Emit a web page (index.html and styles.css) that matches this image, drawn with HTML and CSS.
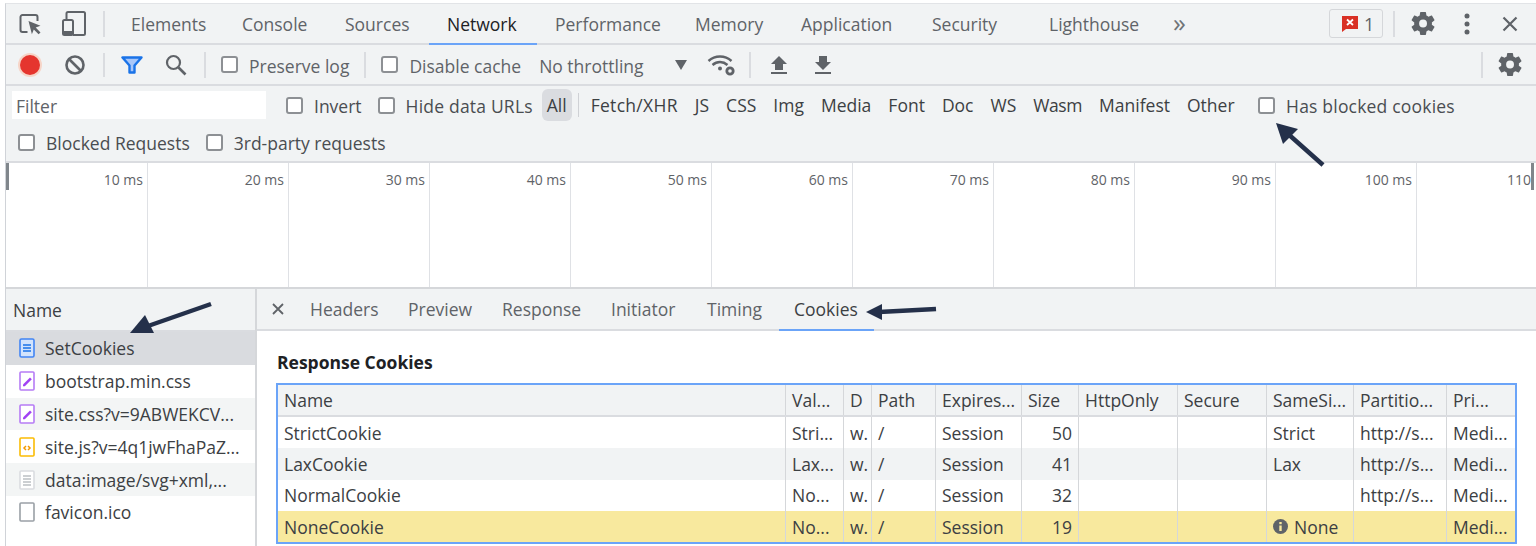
FILE: index.html
```html
<!DOCTYPE html>
<html lang="en">
<head>
<meta charset="utf-8">
<title>DevTools Network</title>
<link rel="stylesheet" href="styles.css">
</head>
<body>
<div class="devtools">
  <div class="bar tabs-bar">
    <div class="icon-group">
      <svg class="ico" width="26" height="26" viewBox="0 0 26 26"><path d="M9.500 21H4.500a2 2 0 0 1-2-2V6a2 2 0 0 1 2-2h13a2 2 0 0 1 2 2v4" fill="none" stroke="#5f6368" stroke-width="2"/><path d="M10.500 10l12 4.800-4.800 1.800 4.800 4.800-1.900 1.900-4.800-4.800-1.900 4.800z" fill="#5f6368"/></svg>
      <svg class="ico" width="24" height="25" viewBox="0 0 24 25"><path d="M4.500 8V2.500A1.500 1.500 0 0 1 6 1h15.500A1.500 1.500 0 0 1 23 2.500v20a1.500 1.500 0 0 1-1.500 1.500H11" fill="none" stroke="#5f6368" stroke-width="2"/><rect x="1" y="9" width="10" height="15" rx="1.500" fill="none" stroke="#5f6368" stroke-width="2"/><rect x="2" y="20" width="8" height="4" fill="#5f6368"/></svg>
    </div>
    <span class="sep sep-tabs"></span>
    <nav class="tabs">
      <span class="tab">Elements</span>
      <span class="tab">Console</span>
      <span class="tab">Sources</span>
      <span class="tab active">Network</span>
      <span class="tab">Performance</span>
      <span class="tab">Memory</span>
      <span class="tab">Application</span>
      <span class="tab">Security</span>
      <span class="tab">Lighthouse</span>
    </nav>
    <span class="more">»</span>
    <div class="right-tools">
      <span class="badge">
        <svg width="18" height="18" viewBox="0 0 18 18"><path d="M1 1h16v13H5l-4 3z" fill="#d93025"/><path d="M6 4.500l6 5.500M12 4.500l-6 5.500" stroke="#fff" stroke-width="1.800"/></svg>
        <span>1</span>
      </span>
      <span class="sep sep-badge"></span>
      <svg class="gear" width="27" height="27" viewBox="0 0 24 24"><path d="M19.400 13c.1-.3.100-.7.100-1s0-.7-.1-1l2.200-1.700c.2-.2.200-.4.100-.6l-2.100-3.600c-.1-.2-.4-.3-.6-.2l-2.600 1c-.5-.4-1.100-.8-1.800-1L14.200 2.200c0-.2-.2-.4-.5-.4h-4.200c-.3 0-.5.200-.5.400l-.4 2.700c-.6.300-1.200.6-1.800 1l-2.600-1c-.2-.1-.5 0-.6.200L1.500 8.700c-.1.200-.1.500.100.600L3.800 11c0 .3-.1.700-.1 1s0 .7.100 1l-2.200 1.700c-.2.200-.2.400-.1.600l2.100 3.600c.1.200.4.300.6.200l2.600-1c.5.400 1.100.8 1.800 1l.4 2.700c0 .2.200.4.500.4h4.200c.3 0 .5-.2.500-.4l.4-2.700c.6-.3 1.200-.6 1.800-1l2.600 1c.2.100.5 0 .6-.2l2.100-3.600c.1-.2.100-.5-.1-.6zM11.600 15.500a3.500 3.500 0 1 1 0-7 3.500 3.500 0 0 1 0 7z" fill="#5f6368"/></svg>
      <svg class="dots" width="6" height="22" viewBox="0 0 6 22"><circle cx="3" cy="3" r="2.500" fill="#5f6368"/><circle cx="3" cy="11" r="2.500" fill="#5f6368"/><circle cx="3" cy="19" r="2.500" fill="#5f6368"/></svg>
      <svg class="close" width="16" height="16" viewBox="0 0 16 16"><path d="M1.500 1.500l13 13M14.500 1.500l-13 13" stroke="#5f6368" stroke-width="2.200"/></svg>
    </div>
  </div>

  <div class="bar tool-bar">
    <span class="record"></span>
    <svg class="clear" width="20" height="20" viewBox="0 0 20 20"><circle cx="10" cy="10" r="8.500" fill="none" stroke="#5f6368" stroke-width="2.600"/><path d="M4 4l12 12" stroke="#5f6368" stroke-width="2.600"/></svg>
    <span class="sep sep-a"></span>
    <svg class="funnel" width="22" height="18" viewBox="0 0 22 18"><path d="M1.500 1.500h19l-7 8v7h-5v-7z" fill="#a8c7fa" stroke="#1a73e8" stroke-width="2.400" stroke-linejoin="round"/></svg>
    <svg class="search" width="22" height="22" viewBox="0 0 22 22"><circle cx="8.500" cy="8.500" r="6.500" fill="none" stroke="#5f6368" stroke-width="2.200"/><path d="M13.500 13.500l7 7" stroke="#5f6368" stroke-width="2.600"/></svg>
    <span class="sep sep-b"></span>
    <label class="check muted check-preserve"><span class="box"></span>Preserve log</label>
    <span class="sep sep-c"></span>
    <label class="check muted check-cache"><span class="box"></span>Disable cache</label>
    <span class="throttle">No throttling</span>
    <span class="caret"></span>
    <svg class="wifi" width="28" height="22" viewBox="0 0 28 22"><path d="M1.500 7C8 1 18 1 24.500 7M5.500 11c4.500-4 10.500-4 15 0" fill="none" stroke="#5f6368" stroke-width="2.400"/><circle cx="13" cy="14.500" r="2" fill="#5f6368"/><circle cx="23" cy="17" r="3.200" fill="none" stroke="#5f6368" stroke-width="2.800"/></svg>
    <span class="sep sep-d"></span>
    <svg class="updown" width="18" height="20" viewBox="0 0 18 20"><path d="M9 1l8 8h-4v6H5V9H1z" fill="#5f6368"/><rect x="1" y="17" width="16" height="2" fill="#5f6368"/></svg>
    <svg class="updown down" width="18" height="20" viewBox="0 0 18 20"><path d="M9 15l8-8h-4V1H5v6H1z" fill="#5f6368"/><rect x="1" y="17" width="16" height="2" fill="#5f6368"/></svg>
    <span class="spring"></span>
    <span class="sep sep-e"></span>
    <svg class="gear gear-tool" width="27" height="27" viewBox="0 0 24 24"><path d="M19.400 13c.1-.3.100-.7.100-1s0-.7-.1-1l2.200-1.700c.2-.2.200-.4.100-.6l-2.100-3.600c-.1-.2-.4-.3-.6-.2l-2.600 1c-.5-.4-1.100-.8-1.800-1L14.200 2.200c0-.2-.2-.4-.5-.4h-4.200c-.3 0-.5.200-.5.400l-.4 2.700c-.6.300-1.200.6-1.800 1l-2.600-1c-.2-.1-.5 0-.6.200L1.500 8.700c-.1.200-.1.500.100.600L3.800 11c0 .3-.1.700-.1 1s0 .7.100 1l-2.200 1.700c-.2.200-.2.400-.1.600l2.100 3.600c.1.200.4.300.6.200l2.600-1c.5.400 1.100.8 1.800 1l.4 2.700c0 .2.200.4.500.4h4.200c.3 0 .5-.2.500-.4l.4-2.700c.6-.3 1.200-.6 1.800-1l2.600 1c.2.100.5 0 .6-.2l2.100-3.600c.1-.2.100-.5-.1-.6zM11.600 15.500a3.500 3.500 0 1 1 0-7 3.500 3.500 0 0 1 0 7z" fill="#5f6368"/></svg>
  </div>

  <div class="filters">
    <div class="filter-row">
      <span class="filter-input">Filter</span>
      <label class="check check-invert"><span class="box"></span>Invert</label>
      <label class="check check-hide"><span class="box"></span>Hide data URLs</label>
      <span class="type-all">All</span>
      <span class="sep sep-type"></span>
      <span class="type type-fetch">Fetch/XHR</span>
      <span class="type">JS</span>
      <span class="type">CSS</span>
      <span class="type">Img</span>
      <span class="type">Media</span>
      <span class="type">Font</span>
      <span class="type">Doc</span>
      <span class="type">WS</span>
      <span class="type type-wasm">Wasm</span>
      <span class="type">Manifest</span>
      <span class="type">Other</span>
      <label class="check check-blocked"><span class="box"></span>Has blocked cookies</label>
    </div>
    <div class="filter-row second">
      <label class="check check-req"><span class="box"></span>Blocked Requests</label>
      <label class="check"><span class="box"></span>3rd-party requests</label>
    </div>
  </div>

  <div class="timeline">
    <span class="tick">10 ms</span><span class="tick">20 ms</span><span class="tick">30 ms</span><span class="tick">40 ms</span><span class="tick">50 ms</span><span class="tick">60 ms</span><span class="tick">70 ms</span><span class="tick">80 ms</span><span class="tick">90 ms</span><span class="tick">100 ms</span><span class="tick tick-last">110</span>
    <span class="handle handle-l"></span><span class="handle handle-r"></span>
  </div>

  <div class="lower">
    <aside class="side">
      <div class="side-head">Name</div>
      <div class="req selected">
        <svg class="file" width="16" height="20" viewBox="0 0 16 20"><rect x="1" y="1" width="14" height="18" rx="1.500" fill="#d2e3fc" stroke="#4285f4" stroke-width="1.600"/><path d="M4 7h8M4 10h8M4 13h8" stroke="#1a73e8" stroke-width="1.500"/></svg>
        <span>SetCookies</span>
      </div>
      <div class="req">
        <svg class="file" width="16" height="20" viewBox="0 0 16 20"><rect x="1" y="1" width="14" height="18" rx="1" fill="#fff" stroke="#b67cf5" stroke-width="1.600"/><path d="M4 13.500l7-7 1.800 1.800-7 7H4z" fill="#a142f4"/></svg>
        <span>bootstrap.min.css</span>
      </div>
      <div class="req alt">
        <svg class="file" width="16" height="20" viewBox="0 0 16 20"><rect x="1" y="1" width="14" height="18" rx="1" fill="#fff" stroke="#b67cf5" stroke-width="1.600"/><path d="M4 13.500l7-7 1.800 1.800-7 7H4z" fill="#a142f4"/></svg>
        <span>site.css?v=9ABWEKCV...</span>
      </div>
      <div class="req">
        <svg class="file" width="16" height="20" viewBox="0 0 16 20"><rect x="1" y="1" width="14" height="18" rx="1" fill="#fff" stroke="#fbbc04" stroke-width="1.600"/><path d="M7 9l-2 2 2 2M9 9l2 2-2 2" fill="none" stroke="#f29900" stroke-width="1.500"/></svg>
        <span>site.js?v=4q1jwFhaPaZ...</span>
      </div>
      <div class="req alt">
        <svg class="file" width="16" height="20" viewBox="0 0 16 20"><rect x="1" y="1" width="14" height="18" rx="1" fill="#fff" stroke="#dadce0" stroke-width="1.600"/><path d="M4 6h8M4 9h8M4 12h8M4 15h8" stroke="#9aa0a6" stroke-width="1.200"/></svg>
        <span>data:image/svg+xml,...</span>
      </div>
      <div class="req">
        <svg class="file" width="16" height="20" viewBox="0 0 16 20"><rect x="1" y="1" width="14" height="18" rx="1" fill="#fff" stroke="#9aa0a6" stroke-width="1.600"/></svg>
        <span>favicon.ico</span>
      </div>
    </aside>

    <section class="detail">
      <div class="detail-tabs">
        <svg class="detail-close" width="12" height="12" viewBox="0 0 12 12"><path d="M1 1l10 10M11 1L1 11" stroke="#5f6368" stroke-width="1.800"/></svg>
        <div class="dtabs">
          <span class="dtab">Headers</span>
          <span class="dtab">Preview</span>
          <span class="dtab">Response</span>
          <span class="dtab">Initiator</span>
          <span class="dtab">Timing</span>
          <span class="dtab active">Cookies</span>
        </div>
      </div>
      <div class="detail-body">
        <h2 class="cookies-title">Response Cookies</h2>
        <div class="cookie-table">
          <div class="row head">
            <span class="cell">Name</span><span class="cell">Val...</span><span class="cell">D</span><span class="cell">Path</span><span class="cell">Expires...</span><span class="cell">Size</span><span class="cell">HttpOnly</span><span class="cell">Secure</span><span class="cell">SameSi...</span><span class="cell">Partitio...</span><span class="cell">Pri...</span>
          </div>
          <div class="row">
            <span class="cell">StrictCookie</span><span class="cell">Stri...</span><span class="cell">w.</span><span class="cell">/</span><span class="cell">Session</span><span class="cell num">50</span><span class="cell"></span><span class="cell"></span><span class="cell">Strict</span><span class="cell">http://s...</span><span class="cell">Medi...</span>
          </div>
          <div class="row zebra">
            <span class="cell">LaxCookie</span><span class="cell">Lax...</span><span class="cell">w.</span><span class="cell">/</span><span class="cell">Session</span><span class="cell num">41</span><span class="cell"></span><span class="cell"></span><span class="cell">Lax</span><span class="cell">http://s...</span><span class="cell">Medi...</span>
          </div>
          <div class="row">
            <span class="cell">NormalCookie</span><span class="cell">No...</span><span class="cell">w.</span><span class="cell">/</span><span class="cell">Session</span><span class="cell num">32</span><span class="cell"></span><span class="cell"></span><span class="cell"></span><span class="cell">http://s...</span><span class="cell">Medi...</span>
          </div>
          <div class="row flagged">
            <span class="cell">NoneCookie</span><span class="cell">No...</span><span class="cell">w.</span><span class="cell">/</span><span class="cell">Session</span><span class="cell num">19</span><span class="cell"></span><span class="cell"></span><span class="cell cell-info"><svg width="15" height="15" viewBox="0 0 15 15"><circle cx="7.500" cy="7.500" r="7.500" fill="#5f6368"/><rect x="6.300" y="6.500" width="2.400" height="5.500" fill="#f8e99e"/><rect x="6.300" y="3" width="2.400" height="2.200" fill="#f8e99e"/></svg>None</span><span class="cell"></span><span class="cell">Medi...</span>
          </div>
        </div>
      </div>
    </section>
  </div>

  <svg class="arrow arrow-blocked" width="54" height="48" viewBox="0 0 54 48"><path d="M50 44L14 12" stroke="#24304a" stroke-width="4.500"/><path d="M3 2l22 6-15 15z" fill="#24304a"/></svg>
  <svg class="arrow arrow-name" width="84" height="38" viewBox="0 0 84 38"><path d="M83 6L20 28" stroke="#24304a" stroke-width="4.500"/><path d="M2 35l15-18 9 18z" fill="#24304a"/></svg>
  <svg class="arrow arrow-cookies" width="72" height="20" viewBox="0 0 72 20"><path d="M71 7L14 10" stroke="#24304a" stroke-width="4.500"/><path d="M1 10l16-8v16z" fill="#24304a"/></svg>
</div>
</body>
</html>
```
FILE: styles.css
```css
* { box-sizing: border-box; }
html, body { margin: 0; padding: 0; background: #fff; }
body { width: 1536px; height: 546px; overflow: hidden; }

.devtools {
  position: relative;
  margin: 3px 0 0 5px;
  height: 543px;
  font-family: "Open Sans", "Noto Sans", sans-serif;
  font-size: 17.5px;
  line-height: 24px;
  color: #3c4043;
  border-left: 1px solid #d0d3d8;
  border-top: 1px solid #e2e4e7;
  overflow: hidden;
}

.bar { display: flex; align-items: center; background: #f1f3f4; border-bottom: 2px solid #dadce0; }
.tabs-bar { height: 41px; }
.tool-bar { height: 41px; }

.icon-group { display: flex; align-items: center; width: 91px; padding-left: 12px; gap: 18px; flex: none; }
.sep { display: block; width: 2px; height: 26px; background: #dadce0; flex: none; }
.sep-tabs { margin-left: 6px; }
.tabs { display: grid; grid-template-columns: 111px 103px 102px 108px 140px 106px 131px 117px 124px; height: 39px; margin-left: 8px; flex: none; }
.tab { display: flex; align-items: center; padding-left: 18px; color: #5f6368; white-space: nowrap; border-bottom: 2px solid transparent; height: 41px; }
.tab.active { color: #202124; border-bottom-color: #6ba4f8; }
.more { font-size: 26px; color: #6f7377; margin-left: 18px; padding-bottom: 4px; flex: none; }
.right-tools { margin-left: auto; display: flex; align-items: center; padding-right: 18px; }
.badge { display: flex; align-items: center; gap: 5px; width: 54px; height: 29px; padding-left: 11px; border: 1px solid #d5d7da; border-radius: 3px; color: #5f6368; font-size: 18px; }
.sep-badge { margin: 0 15px 0 10px; }
.dots { margin: 0 32px 0 27px; }

.record { width: 20px; height: 20px; margin-left: 14px; background: #e5352e; border-radius: 50%; box-shadow: 0 0 0 2px #f6d5c8; flex: none; }
.clear { margin-left: 25px; flex: none; }
.sep-a { margin-left: 18px; height: 24px; }
.funnel { margin-left: 16px; flex: none; }
.search { margin-left: 22px; flex: none; }
.sep-b { margin-left: 17px; }
.check { display: inline-flex; align-items: center; gap: 11px; color: #4a4d51; white-space: nowrap; }
.check.muted { color: #5f6368; padding-top: 2px; }
.check.muted .box { margin-top: -2px; }
.box { display: block; width: 17px; height: 17px; border: 2px solid #8d9094; border-radius: 3px; background: #fff; flex: none; }
.check-preserve { margin-left: 15px; }
.sep-c { margin-left: 15px; }
.check-cache { margin-left: 15px; }
.throttle { margin-left: 18px; padding-top: 2px; color: #5f6368; white-space: nowrap; }
.caret { width: 0; height: 0; margin-left: 31px; border-left: 6px solid transparent; border-right: 6px solid transparent; border-top: 10px solid #5f6368; flex: none; }
.wifi { margin-left: 20px; flex: none; }
.sep-d { margin-left: 14px; }
.updown { margin-left: 19px; flex: none; }
.updown.down { margin-left: 26px; }
.spring { flex: 1; }
.gear-tool { margin: 0 12px 0 14px; flex: none; }

.filters { background: #f1f3f4; border-bottom: 2px solid #dadce0; height: 77px; }
.filter-row { display: flex; align-items: center; height: 38px; padding-left: 6px; }
.filter-row.second { padding-left: 12px; height: 37px; }
.filter-input { width: 254px; height: 28px; padding: 2px 0 0 4px; background: #fff; color: #5f6368; font-size: 17.500px; line-height: 26px; flex: none; }
.check-invert { margin-left: 20px; padding-top: 1px; }
.check-invert .box, .check-hide .box { margin-top: -1px; }
.check-hide { margin-left: 16px; letter-spacing: .2px; padding-top: 1px; }
.type { color: #3c4043; white-space: nowrap; padding: 0 8.500px; }
.type-fetch { letter-spacing: .3px; }
.type-wasm { letter-spacing: -.4px; }
.type-all { margin-left: 9px; height: 32px; line-height: 32px; padding: 0 5px; background: #dadce0; border-radius: 6px; }
.sep-type { width: 1px; height: 24px; background: #cfd1d5; margin: 0 3.500px 0 6px; }
.check-blocked { margin-left: 15px; letter-spacing: .2px; padding-top: 1px; }
.check-blocked .box { margin-top: -1px; }
.check-req { margin-right: 16px; }

.timeline { position: relative; display: flex; height: 126px; background: #fff; border-bottom: 2px solid #d5d7da; overflow: hidden; font-size: 14px; color: #5f6368; }
.tick { display: block; flex: none; width: 141px; height: 100%; padding: 5px 4px 0 0; text-align: right; border-right: 1px solid #dfe1e5; }
.tick:first-child { width: 142px; }
.tick-last { width: 114px; padding-right: 0; border-right: 0; }
.handle { position: absolute; top: 0; width: 3px; height: 27px; background: #80868b; }
.handle-l { left: 0; }
.handle-r { right: 2px; }

.lower { display: flex; height: 257px; }
.side { width: 251px; flex: none; border-right: 2px solid #d5d7da; background: #fff; }
.side-head { height: 43px; padding: 1px 0 0 7px; display: flex; align-items: center; background: #f1f3f4; border-bottom: 2px solid #dadce0; color: #3c4043; }
.req { display: flex; align-items: center; height: 32.800px; padding-left: 13px; gap: 10px; color: #3c4043; white-space: nowrap; }
.req.selected { background: #d9dbdf; }
.req.alt { background: #f3f5f5; }
.file { flex: none; }

.detail { flex: 1; min-width: 0; }
.detail-tabs { display: flex; align-items: stretch; height: 42px; background: #f1f3f4; border-bottom: 2px solid #dadce0; }
.detail-close { align-self: center; margin: 0 11px 0 15px; flex: none; }
.dtabs { display: grid; grid-template-columns: 98px 94px 109px 96px 87px 95px; }
.dtab { display: flex; align-items: center; padding: 0 0 0 15px; height: 42px; color: #5f6368; white-space: nowrap; border-bottom: 2px solid transparent; }
.dtab.active { color: #3c4043; border-bottom-color: #6ba4f8; }
.detail-body { padding: 19px 0 0 19px; }
.cookies-title { margin: 0 0 9px; padding-left: 1px; font-size: 17.500px; line-height: 24px; font-weight: 700; color: #202124; }

.cookie-table { border: 2px solid #6ba4f8; width: 1241px; }
.row { display: grid; grid-template-columns: 508px 58px 28px 64px 86px 57px 99px 89px 87px 93px 68px; height: 31.300px; background: #fff; color: #3c4043; }
.row.head { height: 32px; background: #f1f3f4; border-bottom: 2px solid #dadce0; }
.row.zebra { background: #f1f3f4; }
.row.flagged { background: #f8e99e; }
.cell { display: flex; align-items: center; padding-left: 6px; border-right: 1px solid #d5d7da; white-space: nowrap; overflow: hidden; min-width: 0; }
.cell:last-child { border-right: 0; }
.cell.num { justify-content: flex-end; padding-right: 6px; }
.cell-info { gap: 6px; }

.arrow { position: absolute; }
.arrow-blocked { left: 1267px; top: 117px; }
.arrow-name { left: 122px; top: 294px; }
.arrow-cookies { left: 859px; top: 298px; }
```
